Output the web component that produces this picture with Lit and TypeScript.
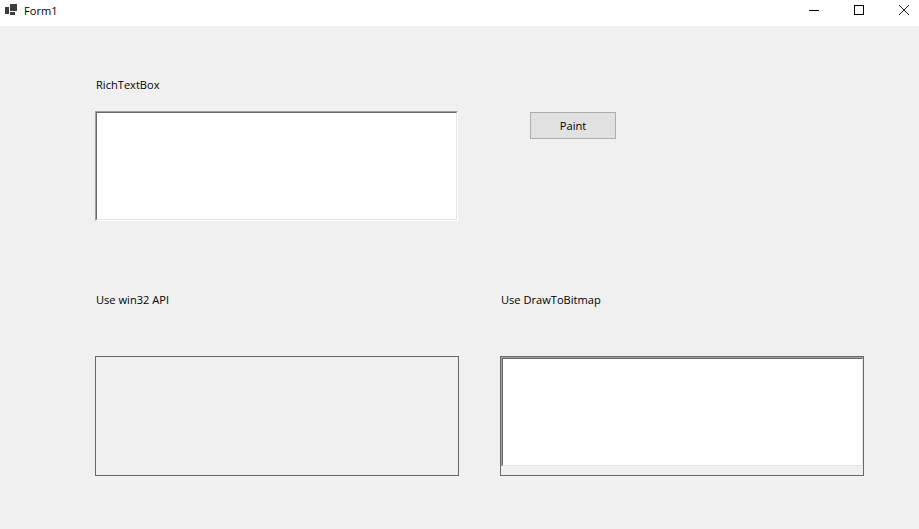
import { LitElement, html, css } from "lit";
import { customElement } from "lit/decorators.js";

@customElement("app-root")
export class AppRoot extends LitElement {
  static styles = css`
    :host {
      display: block;
      width: 919px;
      height: 529px;
      overflow: hidden;
      background: #f0f0f0;
      font-family: "Open Sans", "Noto Sans", sans-serif;
      font-size: 11.1px;
      color: #000;
    }
    .titlebar {
      height: 26px;
      background: #fff;
      display: flex;
      align-items: flex-start;
    }
    .app-icon {
      margin-left: 5px;
      margin-top: 4px;
      width: 12px;
      height: 11px;
      display: block;
    }
    .title {
      margin-left: 7px;
      margin-top: 3px;
      line-height: 16px;
      flex: 1;
    }
    .controls {
      display: flex;
      margin-right: -7px;
    }
    .win-btn {
      width: 45px;
      height: 20px;
      display: flex;
      align-items: center;
      justify-content: center;
    }
    .win-btn svg {
      width: 10px;
      height: 10px;
      display: block;
    }
    .form {
      display: grid;
      grid-template-columns: 405px 364px;
      grid-template-rows: 85px 110px 73px 14px 48px 120px;
      padding-left: 95px;
    }
    .label {
      line-height: 16px;
      padding-left: 1px;
      white-space: nowrap;
    }
    .label-top {
      grid-row: 1;
      grid-column: 1 / -1;
      margin-top: 51px;
    }
    .rich {
      grid-row: 2;
      box-sizing: border-box;
      width: 363px;
      height: 110px;
      background: #fff;
      border-style: solid;
      border-width: 1px;
      border-color: #a0a0a0 #fff #fff #a0a0a0;
    }
    .sunken {
      box-sizing: border-box;
      height: 100%;
      background: #fff;
      border-style: solid;
      border-width: 1px;
      border-color: #696969 #e3e3e3 #e3e3e3 #696969;
    }
    .paint-cell {
      grid-row: 2;
      padding-left: 30px;
      padding-top: 1px;
    }
    .paint {
      box-sizing: border-box;
      width: 86px;
      height: 27px;
      background: #e1e1e1;
      border: 1px solid #adadad;
      font: inherit;
      color: inherit;
      padding: 0;
      display: block;
    }
    .label-a { grid-row: 4; grid-column: 1; align-self: end; }
    .label-b { grid-row: 4; grid-column: 2; align-self: end; }
    .pic {
      grid-row: 6;
      box-sizing: border-box;
      width: 364px;
      height: 120px;
      border: 1px solid #696969;
    }
    .pic-a { grid-column: 1; }
    .pic-b {
      grid-column: 2;
      padding-bottom: 9px;
    }
    .pic-frame {
      box-sizing: border-box;
      height: 100%;
      border-style: solid;
      border-width: 1px 0 0 1px;
      border-color: #a0a0a0;
    }
  `;

  render() {
    return html`
      <div class="titlebar">
        <svg class="app-icon" viewBox="0 0 12 11" fill="#3c3c3c">
          <rect x="5" y="0" width="7" height="7"></rect>
          <rect x="0" y="3" width="4" height="7"></rect>
          <rect x="5" y="8" width="5" height="3"></rect>
        </svg>
        <div class="title">Form1</div>
        <div class="controls">
          <div class="win-btn">
            <svg viewBox="0 0 10 10"><path d="M0 5.5H10" stroke="#000" fill="none"></path></svg>
          </div>
          <div class="win-btn">
            <svg viewBox="0 0 10 10"><rect x="0.5" y="0.5" width="9" height="9" fill="none" stroke="#000"></rect></svg>
          </div>
          <div class="win-btn">
            <svg viewBox="0 0 10 10"><path d="M0 0L10 10M10 0L0 10" stroke="#000" stroke-width="0.9" fill="none"></path></svg>
          </div>
        </div>
      </div>
      <div class="form">
        <div class="label label-top">RichTextBox</div>
        <div class="rich"><div class="sunken"></div></div>
        <div class="paint-cell"><button class="paint">Paint</button></div>
        <div class="label label-a">Use win32 API</div>
        <div class="label label-b">Use DrawToBitmap</div>
        <div class="pic pic-a"></div>
        <div class="pic pic-b"><div class="pic-frame"><div class="sunken"></div></div></div>
      </div>
    `;
  }
}
